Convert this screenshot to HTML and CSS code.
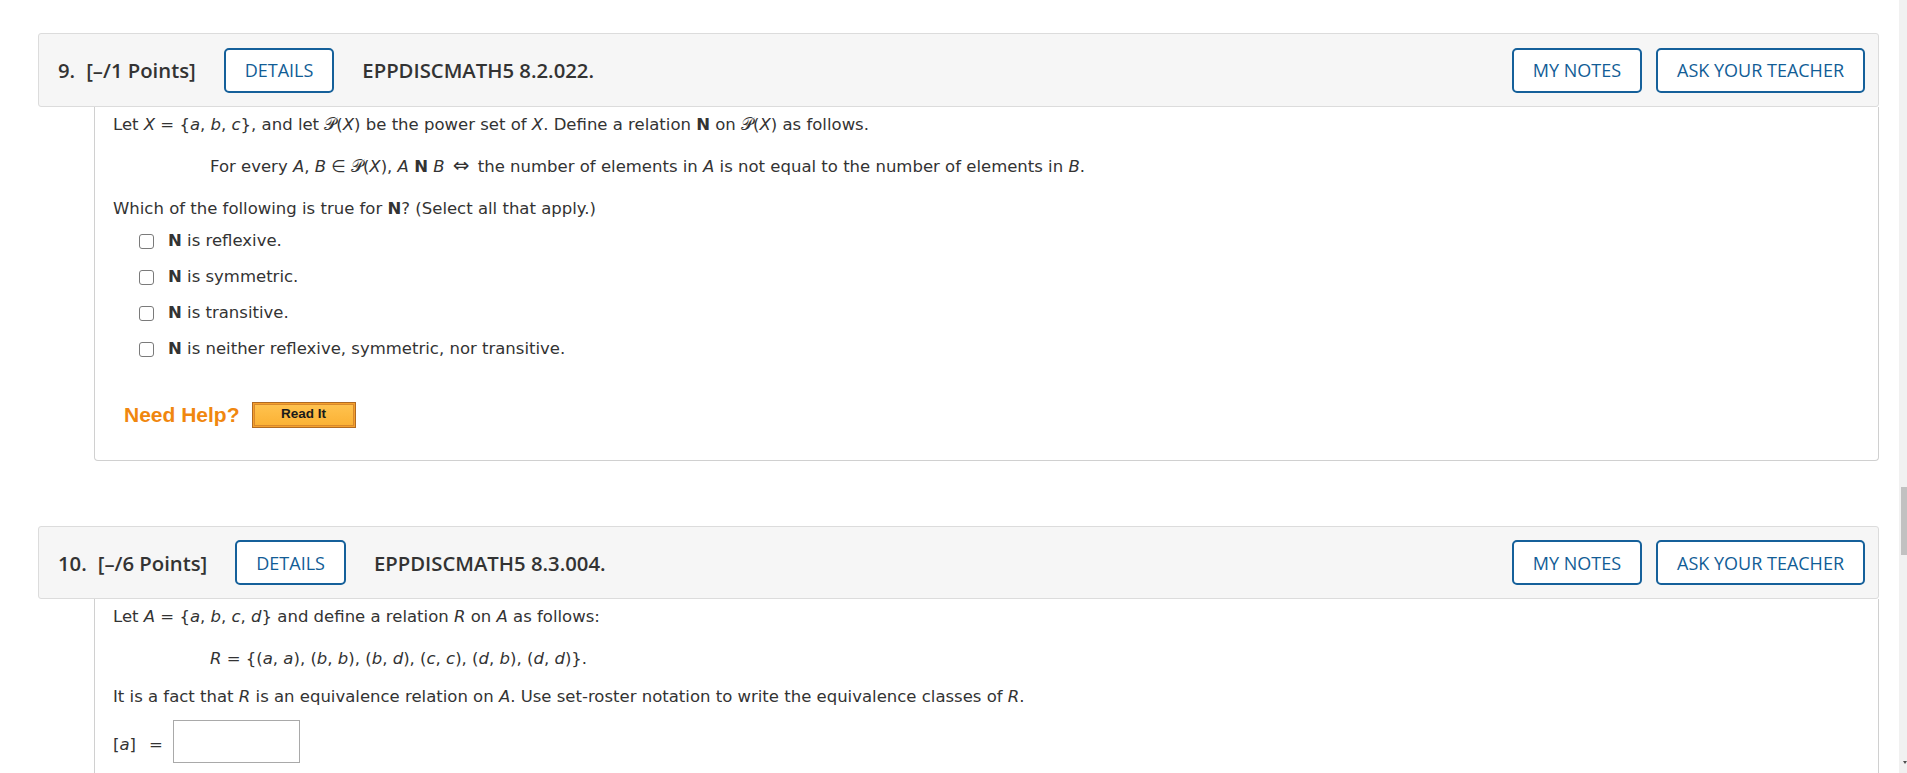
FILE: index.html
```html
<!DOCTYPE html>
<html lang="en">
<head>
<meta charset="utf-8">
<title>Questions</title>
<link rel="stylesheet" href="styles.css">
</head>
<body>
<div class="page">
  <section class="question q9">
    <header class="q-head">
      <span class="q-num">9.</span>
      <span class="q-points">[–/1 Points]</span>
      <button class="btn">DETAILS</button>
      <span class="q-code">EPPDISCMATH5 8.2.022.</span>
      <span class="spacer"></span>
      <button class="btn">MY NOTES</button>
      <button class="btn">ASK YOUR TEACHER</button>
    </header>
    <div class="q-body">
      <p class="line">Let <i>X</i> = {<i>a</i>, <i>b</i>, <i>c</i>}, and let <span class="scr">𝒫</span>(<i>X</i>) be the power set of <i>X</i>. Define a relation <b>N</b> on <span class="scr">𝒫</span>(<i>X</i>) as follows.</p>
      <p class="line indent">For every <i>A</i>, <i>B</i> ∈ <span class="scr">𝒫</span>(<i>X</i>), <i>A</i> <b>N</b> <i>B</i> <span class="iff">⇔</span> the number of elements in <i>A</i> is not equal to the number of elements in <i>B</i>.</p>
      <p class="line">Which of the following is true for <b>N</b>? (Select all that apply.)</p>
      <ul class="options">
        <li><span class="box"></span><span><b>N</b> is reflexive.</span></li>
        <li><span class="box"></span><span><b>N</b> is symmetric.</span></li>
        <li><span class="box"></span><span><b>N</b> is transitive.</span></li>
        <li><span class="box"></span><span><b>N</b> is neither reflexive, symmetric, nor transitive.</span></li>
      </ul>
      <div class="help">
        <span class="help-label">Need Help?</span>
        <span class="read-it"><span>Read It</span></span>
      </div>
    </div>
  </section>

  <section class="question q10">
    <header class="q-head">
      <span class="q-num">10.</span>
      <span class="q-points">[–/6 Points]</span>
      <button class="btn">DETAILS</button>
      <span class="q-code">EPPDISCMATH5 8.3.004.</span>
      <span class="spacer"></span>
      <button class="btn">MY NOTES</button>
      <button class="btn">ASK YOUR TEACHER</button>
    </header>
    <div class="q-body">
      <p class="line">Let <i>A</i> = {<i>a</i>, <i>b</i>, <i>c</i>, <i>d</i>} and define a relation <i>R</i> on <i>A</i> as follows:</p>
      <p class="line indent"><i>R</i> = {(<i>a</i>, <i>a</i>), (<i>b</i>, <i>b</i>), (<i>b</i>, <i>d</i>), (<i>c</i>, <i>c</i>), (<i>d</i>, <i>b</i>), (<i>d</i>, <i>d</i>)}.</p>
      <p class="line fact">It is a fact that <i>R</i> is an equivalence relation on <i>A</i>. Use set-roster notation to write the equivalence classes of <i>R</i>.</p>
      <div class="answer">
        <span class="lhs">[<i>a</i>]</span>
        <span class="eq">=</span>
        <span class="input"></span>
      </div>
    </div>
  </section>
</div>

<div class="scrollbar">
  <div class="thumb"></div>
  <div class="arrow"></div>
</div>
</body>
</html>
```
FILE: styles.css
```css
html, body {
  margin: 0;
  padding: 0;
  overflow: hidden;
  background: #ffffff;
}

.page {
  padding-top: 33px;
  margin-left: 38px;
  width: 1841px;
}

.question + .question {
  margin-top: 65px;
}

.q-head {
  box-sizing: border-box;
  height: 74px;
  display: flex;
  align-items: center;
  padding: 0 13px 0 19px;
  background: #f6f6f6;
  border: 1px solid #dcdcdc;
  border-radius: 3px;
  font-family: "Open Sans", sans-serif;
  color: #333333;
}

.q10 .q-head {
  height: 73px;
}

.q-num {
  font-size: 20.3px;
  font-weight: 600;
  margin-right: 11px;
}

.q-points {
  font-size: 20.3px;
  font-weight: 600;
  margin-right: 28px;
}

.q-code {
  font-size: 20.3px;
  font-weight: 600;
  margin-left: 28px;
}

.spacer {
  flex: 1;
}

.btn {
  box-sizing: border-box;
  height: 45px;
  padding: 0 19px;
  border: 2px solid #15609a;
  border-radius: 5px;
  background: #ffffff;
  color: #125d96;
  font-family: "Open Sans", sans-serif;
  font-size: 18px;
  font-weight: 400;
  cursor: pointer;
}

.spacer + .btn + .btn {
  margin-left: 14px;
}

.q-body {
  margin-left: 56px;
  border: 1px solid #d0d0d0;
  border-top: none;
  border-radius: 0 0 4px 4px;
  padding: 7px 18px 32px 18px;
  font-family: "DejaVu Sans", Verdana, sans-serif;
  font-size: 16.5px;
  line-height: 22px;
  color: #333333;
}

.q10 .q-body {
  padding-bottom: 40px;
}

.line {
  margin: 0;
}

.line + .line {
  margin-top: 20px;
}

.line.fact {
  margin-top: 16px;
}

.indent {
  padding-left: 97px;
}

.scr {
  font-family: "DejaVu Sans", sans-serif;
  font-style: normal;
}

.iff {
  font-family: "DejaVu Sans", sans-serif;
  font-size: 20px;
  line-height: 10px;
  margin: 0 3px;
}

.options {
  list-style: none;
  margin: 10px 0 0 0;
  padding: 0 0 0 26px;
  display: flex;
  flex-direction: column;
  gap: 14px;
}

.options li {
  display: flex;
  align-items: center;
  height: 22px;
}

.box {
  box-sizing: border-box;
  width: 15px;
  height: 15px;
  border: 1px solid #7a7a7a;
  border-radius: 3px;
  background: #ffffff;
  margin-right: 14px;
}

.help {
  margin-top: 42px;
  margin-left: 11px;
  display: flex;
  align-items: center;
  height: 26px;
}

.help-label {
  font-family: "Liberation Sans", Arial, sans-serif;
  font-weight: 700;
  font-size: 21px;
  color: #f0870f;
  margin-right: 12px;
}

.read-it {
  box-sizing: border-box;
  width: 104px;
  height: 26px;
  border: 1px solid #b06a22;
  background: #f5a02c;
  padding: 1px;
  display: flex;
}

.read-it span {
  flex: 1;
  border: 1px solid #d8892c;
  background: linear-gradient(#ffc24e, #fbb235);
  font-family: "Liberation Sans", Arial, sans-serif;
  font-weight: 700;
  font-size: 13.5px;
  line-height: 18px;
  text-align: center;
  color: #1a1a1a;
}

.answer {
  margin-top: 12px;
  display: flex;
  align-items: flex-start;
}

.lhs {
  margin-top: 14px;
  margin-right: 13px;
}

.eq {
  margin-top: 14px;
  margin-right: 10px;
}

.input {
  box-sizing: border-box;
  width: 127px;
  height: 43px;
  border: 1px solid #a9a9a9;
  background: #ffffff;
}

.scrollbar {
  position: fixed;
  top: 0;
  right: 0;
  width: 8px;
  height: 100%;
  background: #f1f1f1;
}

.thumb {
  position: absolute;
  top: 487px;
  left: 2px;
  width: 6px;
  height: 68px;
  background: #c1c1c1;
}

.arrow {
  position: absolute;
  bottom: 9px;
  left: 4px;
  width: 0;
  height: 0;
  border-left: 2px solid transparent;
  border-right: 2px solid transparent;
  border-top: 3px solid #505050;
}
```
